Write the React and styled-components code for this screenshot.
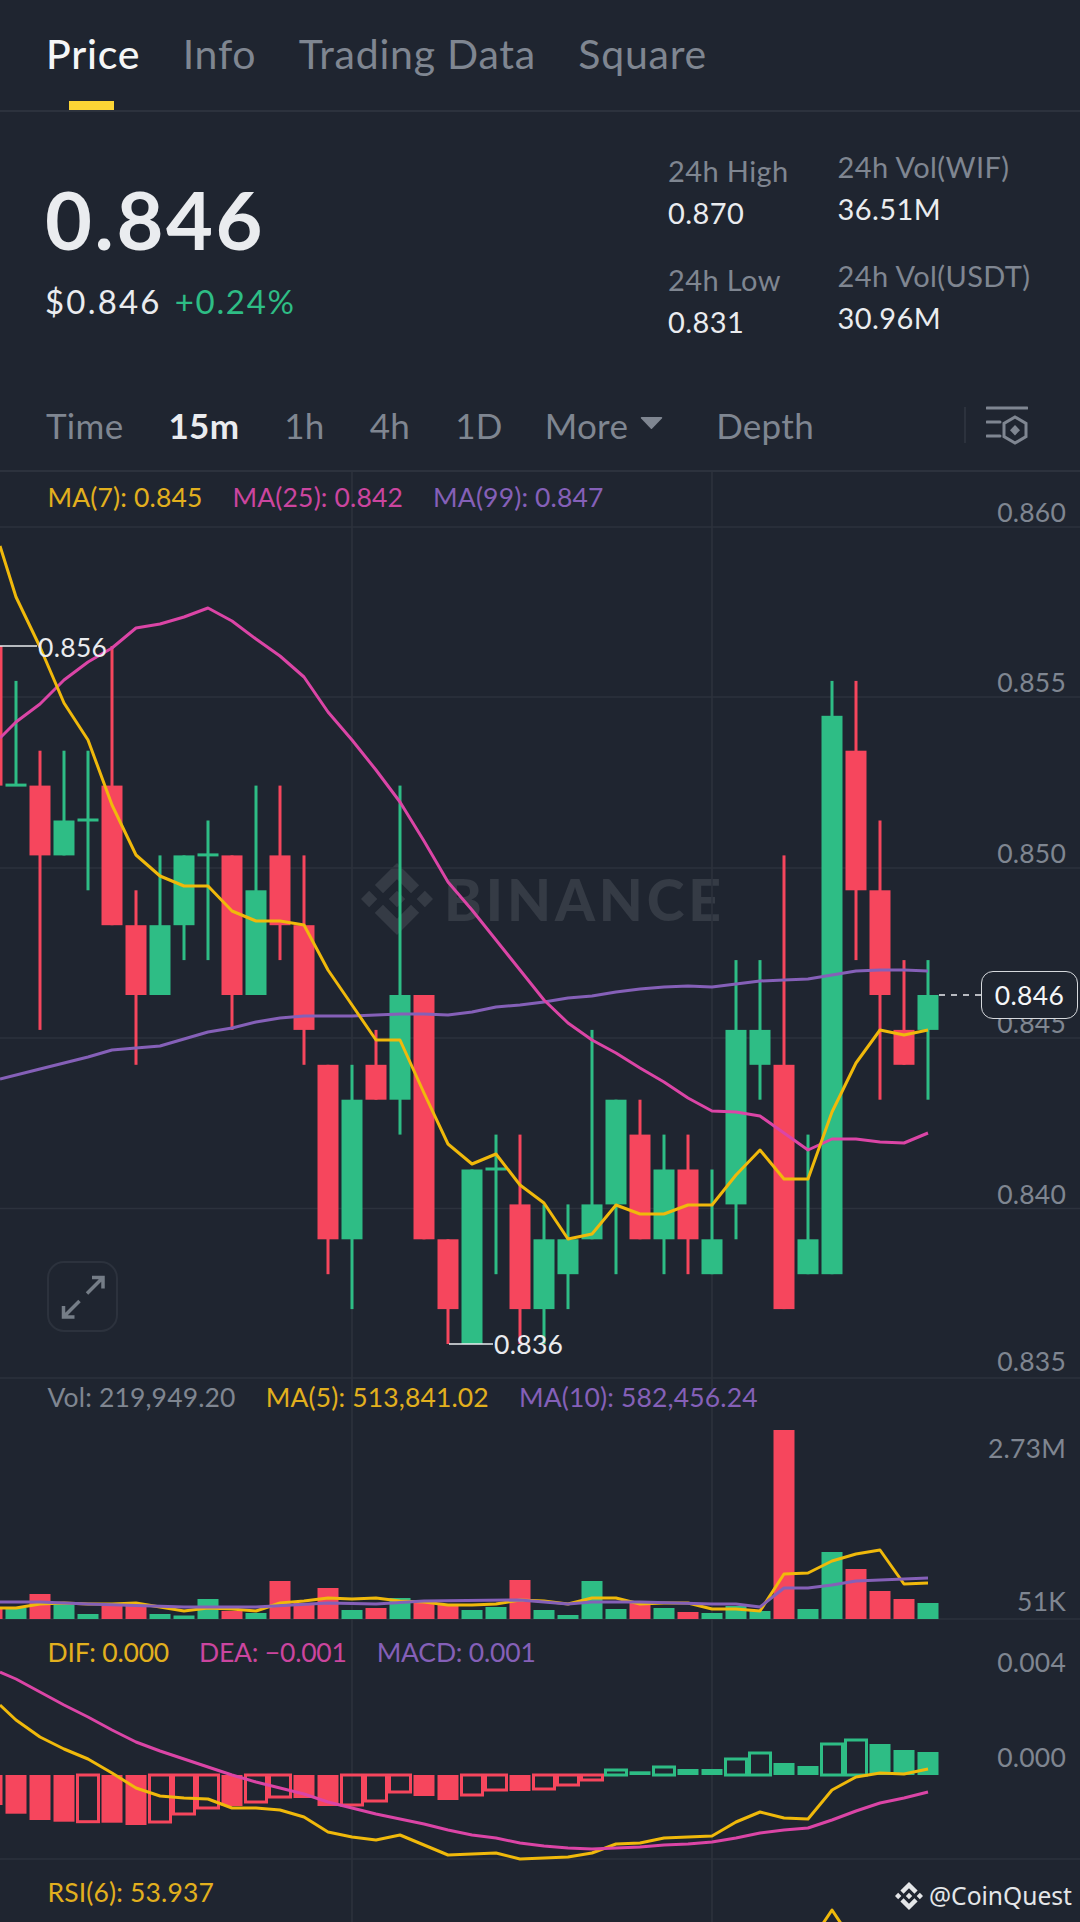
import React from 'react';
import styled, { createGlobalStyle } from 'styled-components';

const BG = '#1F2530';
const GREEN = '#2EBD85';
const RED = '#F6465D';
const YELLOW = '#F0B90B';
const PINK = '#DB45A6';
const PURPLE = '#8560B8';
const GRID = '#2C323D';
const GREY = '#7F8691';
const TEXT = '#EAECEF';
const FONT = '"Lato", "Open Sans", "Liberation Sans", sans-serif';

const Global = createGlobalStyle`
  html, body { margin: 0; padding: 0; background: ${BG}; }
  * { box-sizing: border-box; }
`;

const Page = styled.div`
  position: relative;
  width: 1080px;
  height: 1922px;
  background: ${BG};
  overflow: hidden;
  font-family: ${FONT};
  color: ${TEXT};
  display: flex;
  flex-direction: column;
`;

const TabBar = styled.nav`
  height: 112px;
  flex: none;
  display: flex;
  gap: 42.5px;
  padding: 30px 46px 0;
  border-bottom: 2px solid ${GRID};
`;
const Tab = styled.div`
  position: relative;
  height: 80px;
  font-size: 41px;
  letter-spacing: 0.75px;
  line-height: 48px;
  font-weight: ${p => (p.$active ? 500 : 400)};
  color: ${p => (p.$active ? '#F5F6F7' : GREY)};
  ${p => p.$active && `
    &::after {
      content: '';
      position: absolute;
      left: 23px;
      bottom: 0;
      width: 45px;
      height: 9px;
      background: #FCD535;
    }
  `}
`;

const Stats = styled.section`
  height: 268px;
  flex: none;
  display: flex;
  justify-content: space-between;
  padding: 0 0 0 45px;
`;
const PriceBlock = styled.div`
  display: flex;
  flex-direction: column;
  padding-top: 61px;
`;
const BigPrice = styled.div`
  font-size: 81px;
  letter-spacing: 2.6px;
  line-height: 92px;
  font-weight: 700;
  color: ${TEXT};
`;
const SubRow = styled.div`
  display: flex;
  gap: 13px;
  margin-top: 16px;
  font-size: 33px;
  letter-spacing: 2.2px;
  line-height: 40px;
`;
const Change = styled.span`
  color: ${GREEN};
  letter-spacing: 1.7px;
`;
const StatGrid = styled.div`
  width: 412px;
  display: flex;
  gap: 49px;
`;
const StatCol = styled.div`
  display: flex;
  flex-direction: column;
  gap: 34px;
  padding-top: ${p => p.$top}px;
`;
const StatItem = styled.div`
  display: flex;
  flex-direction: column;
  gap: 9px;
`;
const StatLabel = styled.div`
  font-size: 29px;
  letter-spacing: 0.4px;
  line-height: 33px;
  color: ${GREY};
  white-space: nowrap;
`;
const StatValue = styled.div`
  font-size: 29px;
  letter-spacing: 0.4px;
  line-height: 33px;
  color: ${TEXT};
`;

const Toolbar = styled.div`
  height: 92px;
  flex: none;
  display: flex;
  align-items: center;
  gap: 45px;
  padding: 0 52px 0 46px;
  border-bottom: 2px solid ${GRID};
`;
const Interval = styled.div`
  font-size: 35px;
  letter-spacing: 0.3px;
  line-height: 40px;
  font-weight: ${p => (p.$active ? 700 : 400)};
  color: ${p => (p.$active ? TEXT : GREY)};
  display: flex;
  align-items: center;
  gap: 12px;
  ${p => p.$push && `margin-left: ${p.$push}px;`}
`;
const ToolSpacer = styled.div`
  flex: 1;
`;
const ToolDivider = styled.div`
  width: 2px;
  height: 36px;
  background: ${GRID};
  margin-right: -25px;
`;
const Caret = styled.svg`
  width: 23px;
  height: 14px;
  margin-top: -4px;
`;
const SettingsIcon = styled.svg`
  width: 42px;
  height: 40px;
  margin-top: 2px;
`;

const ChartArea = styled.div`
  position: relative;
  flex: 1;
  display: flex;
  flex-direction: column;
`;
const Canvas = styled.svg`
  position: absolute;
  left: 0;
  top: 0;
  width: 1080px;
  height: 1450px;
  z-index: 1;
`;
const Watermark = styled.div`
  position: absolute;
  left: 361px;
  top: 391px;
  display: flex;
  align-items: center;
  gap: 11px;
  z-index: 0;
  color: #353B45;
  font-size: 57px;
  line-height: 72px;
  font-weight: 900;
  letter-spacing: 3.9px;
`;
const WatermarkLogo = styled.svg`
  width: 72px;
  height: 72px;
  fill: #353B45;
`;

const Pane = styled.div`
  position: relative;
  z-index: 2;
  height: ${p => p.$h}px;
  flex: none;
  padding-top: ${p => p.$pad}px;
`;
const Legend = styled.div`
  display: flex;
  gap: 30px;
  padding-left: 47.5px;
  font-size: 26.5px;
  letter-spacing: ${p => p.$ls ?? 0.15}px;
  line-height: 30px;
`;
const LegendItem = styled.span`
  color: ${p => p.$c};
  white-space: nowrap;
`;
const AxisLabel = styled.div`
  position: absolute;
  right: 14px;
  top: ${p => p.$y}px;
  transform: translateY(-50%);
  font-size: 26.5px;
  letter-spacing: 0.2px;
  line-height: 30px;
  color: ${GREY};
`;
const Marker = styled.div`
  position: absolute;
  left: ${p => p.$x}px;
  top: ${p => p.$y}px;
  transform: translateY(-50%);
  font-size: 26.5px;
  letter-spacing: 0.3px;
  line-height: 30px;
  color: ${TEXT};
`;
const PriceTag = styled.div`
  position: absolute;
  left: 981px;
  top: 499px;
  width: 97px;
  height: 48px;
  border: 1.5px solid #D5D8DC;
  border-radius: 12px;
  background: ${BG};
  display: flex;
  align-items: center;
  justify-content: center;
  font-size: 26.5px;
  letter-spacing: 0.4px;
  color: #F5F6F7;
  z-index: 2;
`;
const ExpandButton = styled.div`
  position: absolute;
  left: 47px;
  top: 789px;
  width: 71px;
  height: 71px;
  border: 2.5px solid ${GRID};
  border-radius: 17px;
  display: flex;
  align-items: center;
  justify-content: center;
`;
const ExpandIcon = styled.svg`
  width: 66px;
  height: 66px;
  fill: none;
  stroke: #757D87;
  stroke-width: 3.5;
`;
const RsiLayer = styled.div`
  position: absolute;
  left: 0;
  top: 1859px;
  width: 1080px;
  height: 63px;
  padding-top: 18px;
  z-index: 3;
`;
const Credit = styled.div`
  position: absolute;
  right: 8px;
  top: 19px;
  display: flex;
  align-items: center;
  gap: 6px;
  font-family: "Noto Sans", "Open Sans", sans-serif;
  font-size: 24.6px;
  line-height: 36px;
  color: #E4E6E8;
`;
const CreditLogo = styled.svg`
  width: 28px;
  height: 28px;
  fill: #E4E6E8;
`;

const LOGO = [
  'M38.73 53.2l24.59-24.58 24.6 24.6 14.3-14.31L63.32 0 24.43 38.9zM0 63.31l14.3-14.31 14.31 14.31-14.31 14.3zM38.73 73.41L63.32 98l24.6-24.6 14.31 14.29-38.9 38.91-38.91-38.88-.02-.02zM98 63.31l14.3-14.3 14.31 14.3-14.31 14.31z',
  'M77.83 63.3L63.32 48.78 52.59 59.51l-1.24 1.23-2.54 2.54 14.51 14.5 14.51-14.47z',
];
const Logo = ({ as: C }) => (
  <C viewBox="0 0 126.61 126.61">
    {LOGO.map(d => <path key={d} d={d} />)}
  </C>
);

const X = i => 16 + 24 * i;
const L = n => 646 + (856 - n) * 34.9;

// [index, up?, wickTop, bodyTop, bodyBottom, wickBottom, doji]
const CANDLES = [
  [-1, 0, 856, 856, 852, 852],
  [0, 1, 855, 852, 852, 852, 'd'],
  [1, 0, 853, 852, 850, 845],
  [2, 1, 853, 851, 850, 850],
  [3, 1, 853, 851, 851, 849, 'd'],
  [4, 0, 856, 852, 848, 848],
  [5, 0, 849, 848, 846, 844],
  [6, 1, 850, 848, 846, 846],
  [7, 1, 850, 850, 848, 847],
  [8, 1, 851, 850, 850, 847, 'd'],
  [9, 0, 850, 850, 846, 845],
  [10, 1, 852, 849, 846, 846],
  [11, 0, 852, 850, 848, 847],
  [12, 0, 850, 848, 845, 844],
  [13, 0, 844, 844, 839, 838],
  [14, 1, 844, 843, 839, 837],
  [15, 0, 845, 844, 843, 843],
  [16, 1, 852, 846, 843, 842],
  [17, 0, 846, 846, 839, 839],
  [18, 0, 839, 839, 837, 836],
  [19, 1, 841, 841, 836, 836],
  [20, 1, 842, 841, 841, 838, 'd'],
  [21, 0, 842, 840, 837, 836],
  [22, 1, 840, 839, 837, 836],
  [23, 1, 840, 839, 838, 837],
  [24, 1, 845, 840, 839, 839],
  [25, 1, 843, 843, 840, 838],
  [26, 0, 843, 842, 839, 839],
  [27, 1, 842, 841, 839, 838],
  [28, 0, 842, 841, 839, 838],
  [29, 1, 841, 839, 838, 838],
  [30, 1, 847, 845, 840, 839],
  [31, 1, 847, 845, 844, 843],
  [32, 0, 850, 844, 837, 837],
  [33, 1, 842, 839, 838, 838],
  [34, 1, 855, 854, 838, 838],
  [35, 0, 855, 853, 849, 847],
  [36, 0, 851, 849, 846, 843],
  [37, 0, 847, 845, 844, 844],
  [38, 1, 847, 846, 845, 843],
];

const MA7 = '0,546 16,597 40,647 64,703 88,740 112,805 136,855 160,876 184,886 208,886 232,911 256,921 280,921 304,925 328,970 352,1005 376,1040 400,1040 424,1093 448,1144 472,1164 496,1154 520,1185 544,1203 568,1239 592,1234 616,1205 640,1214 664,1214 688,1205 712,1205 736,1175 760,1150 784,1179 808,1179 832,1112 856,1063 880,1030 904,1035 928,1030';
const MA25 = '0,738 16,722 40,704 64,680 88,662 112,648 136,628 160,624 184,617 208,608 232,621 256,639 280,656 304,677 328,712 352,740 376,770 400,802 424,841 448,882 472,910 496,940 520,970 544,1000 568,1023 592,1040 616,1053 640,1068 664,1082 688,1098 712,1111 736,1112 760,1116 784,1133 808,1150 832,1139 856,1139 880,1142 904,1143 928,1133';
const MA99 = '0,1079 40,1069 64,1063 88,1057 112,1050 136,1048 160,1046 184,1039 208,1032 232,1028 256,1022 280,1018 304,1016 328,1016 352,1016 376,1015 400,1014 424,1014 448,1015 472,1012 496,1007 520,1005 544,1002 568,998 592,996 616,992 640,989 664,987 688,986 712,987 736,984 760,981 784,980 808,979 832,975 856,971 880,970 904,970 928,971';

// [up?, height]
const VOLUMES = [
  [0, 11], [1, 11], [0, 25], [1, 16], [1, 5], [0, 13], [0, 13], [1, 5], [1, 3.5], [1, 20],
  [0, 8], [1, 6], [0, 38], [0, 16], [0, 31], [1, 9], [0, 11], [1, 21], [0, 17], [0, 14],
  [1, 9], [1, 12], [0, 39], [1, 9], [1, 4], [1, 38], [1, 10], [0, 17], [1, 11], [0, 7],
  [1, 6], [1, 13], [1, 8], [0, 189], [1, 10], [1, 67], [0, 50], [0, 28], [0, 20], [1, 16],
];
const VOL5 = '0,1608 16,1608 40,1604 64,1603 88,1604 112,1604 136,1603 160,1607 184,1611 208,1608 232,1609 256,1611 280,1603 304,1601 328,1598 352,1599 376,1598 400,1601 424,1602 448,1605 472,1605 496,1604 520,1600 544,1601 568,1604 592,1598 616,1598 640,1604 664,1603 688,1603 712,1609 736,1609 760,1611 784,1574 808,1573 832,1561 856,1554 880,1550 904,1584 928,1583';
const VOL10 = '0,1602 40,1602 64,1603 88,1604 184,1607 256,1607 328,1603 376,1604 424,1601 520,1600 544,1602 568,1604 592,1602 640,1602 712,1604 736,1604 760,1607 784,1588 808,1588 832,1585 856,1581 880,1580 904,1579 928,1578';

// [height (negative is below zero), hollow?]
const MACD = [
  [-30, 0], [-38.7, 0], [-45, 0], [-46.7, 0], [-46.7, 1], [-47.7, 0], [-50, 0], [-47, 1], [-39, 1], [-33, 1],
  [-31, 0], [-27, 1], [-22, 1], [-23, 0], [-31, 0], [-30, 1], [-26, 1], [-17, 1], [-21, 0], [-25, 0],
  [-20, 1], [-15, 1], [-16, 0], [-14, 1], [-10, 1], [-5, 1], [5, 1], [3.7, 0], [8, 1], [6, 0],
  [6, 0], [16, 1], [22, 1], [12, 0], [9, 0], [31, 1], [35, 1], [31, 0], [25, 0], [23, 0],
];
const DIF = '0,1705 16,1720 40,1737 64,1749 88,1759 112,1773 136,1788 160,1796 184,1798 208,1799 232,1808 256,1808 280,1810 304,1817 328,1832 352,1837 376,1840 400,1835 424,1845 448,1855 472,1854 496,1853 520,1859 544,1858 568,1857 592,1853 616,1844 640,1843 664,1838 688,1837 712,1836 736,1822 760,1812 784,1818 808,1819 832,1790 856,1777 880,1773 904,1774 928,1769';
const DEA = '0,1672 16,1679 40,1692 64,1705 88,1717 112,1730 136,1742 160,1751 184,1759 208,1767 232,1775 256,1782 280,1788 304,1794 328,1802 352,1808 376,1814 400,1819 424,1824 448,1830 472,1835 496,1838 520,1843 544,1846 568,1848 592,1849 616,1848 640,1847 664,1845 688,1844 712,1842 736,1838 760,1833 784,1830 808,1828 832,1820 856,1811 880,1803 904,1798 928,1792';

const BASE = 1619;
const ZERO = 1775;

const Line = ({ points, c, w = 3 }) => (
  <polyline points={points} fill="none" stroke={c} strokeWidth={w} strokeLinejoin="round" />
);

const Chart = () => (
  <Canvas viewBox="0 472 1080 1450">
    {[527, 697, 868, 1038, 1208.5, 1378, 1619, 1859].map(y => (
      <line key={y} x1="0" x2="1080" y1={y} y2={y} stroke={GRID} strokeWidth="1.6" />
    ))}
    {[352, 712].map(x => (
      <line key={x} x1={x} x2={x} y1="472" y2="1922" stroke={GRID} strokeWidth="1.6" />
    ))}

    {CANDLES.map(([i, up, wt, bt, bb, wb, doji]) => {
      const c = up ? GREEN : RED;
      const x = X(i);
      return (
        <g key={i} fill={c}>
          <rect x={x - 1.5} width="3" y={L(wt)} height={L(wb) - L(wt)} />
          {doji
            ? <rect x={x - 10.5} width="21" y={L(bt) - 2} height="3" />
            : <rect x={x - 10.5} width="21" y={L(bt)} height={L(bb) - L(bt)} />}
        </g>
      );
    })}
    <Line points={MA99} c={PURPLE} />
    <Line points={MA25} c={PINK} />
    <Line points={MA7} c={YELLOW} />

    <polyline points="0,646 37,646" stroke="#EAECEF" strokeWidth="1.6" fill="none" />
    <polyline points="449,1344 493,1344" stroke="#EAECEF" strokeWidth="1.6" fill="none" />
    <line x1="939" x2="981" y1="995" y2="995" stroke="#EAECEF" strokeWidth="1.6" strokeDasharray="6 6" />

    {VOLUMES.map(([up, h], k) => (
      <rect key={k} x={X(k - 1) - 10.5} width="21" y={BASE - h} height={h} fill={up ? GREEN : RED} />
    ))}
    <Line points={VOL5} c={YELLOW} />
    <Line points={VOL10} c={PURPLE} />

    {MACD.map(([h, hollow], k) => {
      const c = h > 0 ? GREEN : RED;
      const y = h > 0 ? ZERO - h : ZERO;
      const abs = Math.abs(h);
      return hollow ? (
        <rect key={k} x={X(k - 1) - 10.5} width="21" y={y} height={abs} fill="none" stroke={c} strokeWidth="3" />
      ) : (
        <rect key={k} x={X(k - 1) - 10.5} width="21" y={y} height={abs} fill={c} />
      );
    })}
    <Line points={DIF} c={YELLOW} />
    <Line points={DEA} c={PINK} />
    <Line points="822,1925 832,1910 842,1925" c={YELLOW} />
  </Canvas>
);

export default function App() {
  return (
    <Page>
      <Global />
      <TabBar>
        <Tab $active>Price</Tab>
        <Tab>Info</Tab>
        <Tab>Trading Data</Tab>
        <Tab>Square</Tab>
      </TabBar>

      <Stats>
        <PriceBlock>
          <BigPrice>0.846</BigPrice>
          <SubRow>
            <span>$0.846</span>
            <Change>+0.24%</Change>
          </SubRow>
        </PriceBlock>
        <StatGrid>
          <StatCol $top={42}>
            <StatItem>
              <StatLabel>24h High</StatLabel>
              <StatValue>0.870</StatValue>
            </StatItem>
            <StatItem>
              <StatLabel>24h Low</StatLabel>
              <StatValue>0.831</StatValue>
            </StatItem>
          </StatCol>
          <StatCol $top={38}>
            <StatItem>
              <StatLabel>24h Vol(WIF)</StatLabel>
              <StatValue>36.51M</StatValue>
            </StatItem>
            <StatItem>
              <StatLabel>24h Vol(USDT)</StatLabel>
              <StatValue>30.96M</StatValue>
            </StatItem>
          </StatCol>
        </StatGrid>
      </Stats>

      <Toolbar>
        <Interval>Time</Interval>
        <Interval $active>15m</Interval>
        <Interval>1h</Interval>
        <Interval>4h</Interval>
        <Interval>1D</Interval>
        <Interval $push={-3}>
          More
          <Caret viewBox="0 0 23 14"><path d="M1.5 1h20a.8.8 0 0 1 .6 1.3L12 12.8a.8.8 0 0 1-1.1 0L.9 2.3A.8.8 0 0 1 1.5 1z" fill={GREY} /></Caret>
        </Interval>
        <Interval $push={8}>Depth</Interval>
        <ToolSpacer />
        <ToolDivider />
        <SettingsIcon viewBox="0 0 42 40" fill="none" stroke={GREY} strokeWidth="3">
          <path d="M1 2h40M1 16h13M1 30h13" strokeLinecap="round" />
          <path d="M29 11l11 6.4v13.2l-11 6.4-11-6.4V17.400z" />
          <path d="M29 19l5 5.200-5 5.200-5-5.200z" fill={GREY} stroke="none" />
        </SettingsIcon>
      </Toolbar>

      <ChartArea>
        <Watermark>
          <Logo as={WatermarkLogo} />
          <span>BINANCE</span>
        </Watermark>
        <Chart />

        <Pane $h={906} $pad={10}>
          <Legend>
            <LegendItem $c="#E2B01E">MA(7): 0.845</LegendItem>
            <LegendItem $c="#CB459F">MA(25): 0.842</LegendItem>
            <LegendItem $c={PURPLE}>MA(99): 0.847</LegendItem>
          </Legend>
          <AxisLabel $y={40}>0.860</AxisLabel>
          <AxisLabel $y={210}>0.855</AxisLabel>
          <AxisLabel $y={381}>0.850</AxisLabel>
          <AxisLabel $y={551}>0.845</AxisLabel>
          <AxisLabel $y={722}>0.840</AxisLabel>
          <AxisLabel $y={889}>0.835</AxisLabel>
          <Marker $x={38} $y={175}>0.856</Marker>
          <Marker $x={494} $y={872}>0.836</Marker>
          <PriceTag>0.846</PriceTag>
          <ExpandButton>
            <ExpandIcon viewBox="0 0 66 66">
              <path d="M37 29.5L53 13.5M42 13.5h11v11M29.5 37L13.5 53M13.5 42v11h11" />
            </ExpandIcon>
          </ExpandButton>
        </Pane>

        <Pane $h={241} $pad={4}>
          <Legend>
            <LegendItem $c={GREY}>Vol: 219,949.20</LegendItem>
            <LegendItem $c="#E2B01E">MA(5): 513,841.02</LegendItem>
            <LegendItem $c={PURPLE}>MA(10): 582,456.24</LegendItem>
          </Legend>
          <AxisLabel $y={70}>2.73M</AxisLabel>
          <AxisLabel $y={223}>51K</AxisLabel>
        </Pane>

        <Pane $h={240} $pad={18}>
          <Legend $ls={-0.2}>
            <LegendItem $c="#E2B01E">DIF: 0.000</LegendItem>
            <LegendItem $c="#CB459F">DEA: −0.001</LegendItem>
            <LegendItem $c={PURPLE}>MACD: 0.001</LegendItem>
          </Legend>
          <AxisLabel $y={43}>0.004</AxisLabel>
          <AxisLabel $y={138}>0.000</AxisLabel>
        </Pane>
      </ChartArea>

      <RsiLayer>
        <Legend>
          <LegendItem $c="#E2B01E">RSI(6): 53.937</LegendItem>
        </Legend>
        <Credit>
          <Logo as={CreditLogo} />
          <span>@CoinQuest</span>
        </Credit>
      </RsiLayer>
    </Page>
  );
}
